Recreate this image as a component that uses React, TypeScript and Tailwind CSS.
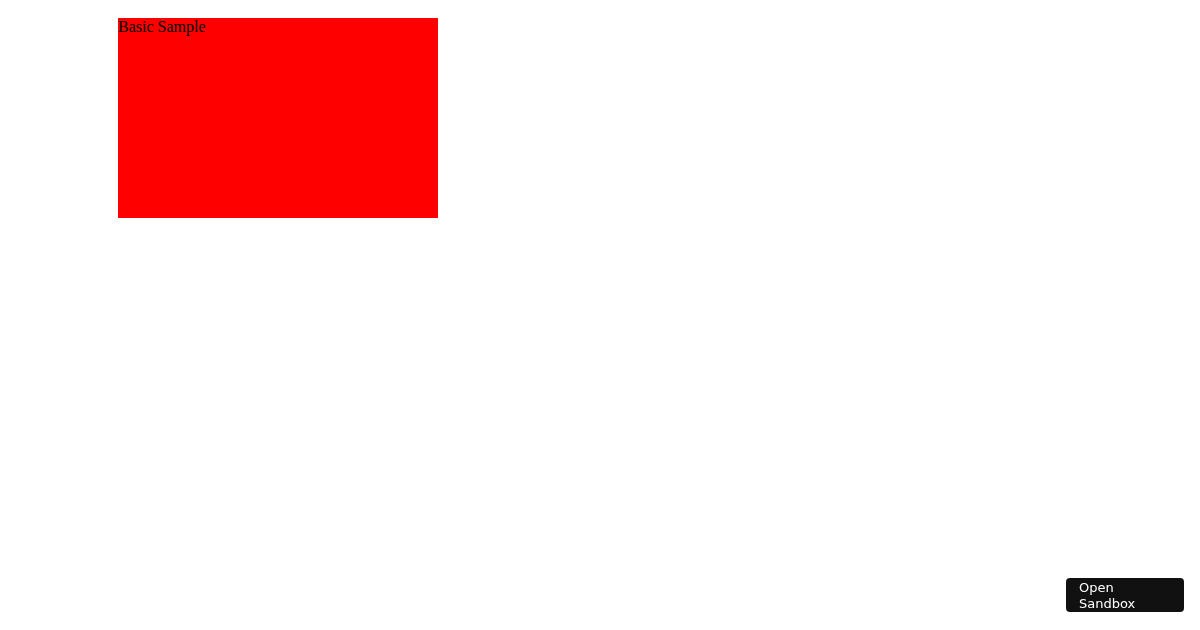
export default function App() {
  return (
    <div className="min-h-[630px] bg-white">
      <div className="pt-[18px] pl-[118px]">
        <div className="w-[320px] h-[200px] bg-[#ff0000] text-black text-base leading-[18px] font-['Liberation_Serif',serif]">
          Basic Sample
        </div>
      </div>

      <button className="fixed right-[16px] bottom-[18px] w-[118px] h-[34px] rounded bg-[#111111] text-white text-left pl-[13px] pr-[24px] pt-[2px] text-[13px] leading-[16px] font-['DejaVu_Sans',sans-serif]">
        Open Sandbox
      </button>
    </div>
  );
}
